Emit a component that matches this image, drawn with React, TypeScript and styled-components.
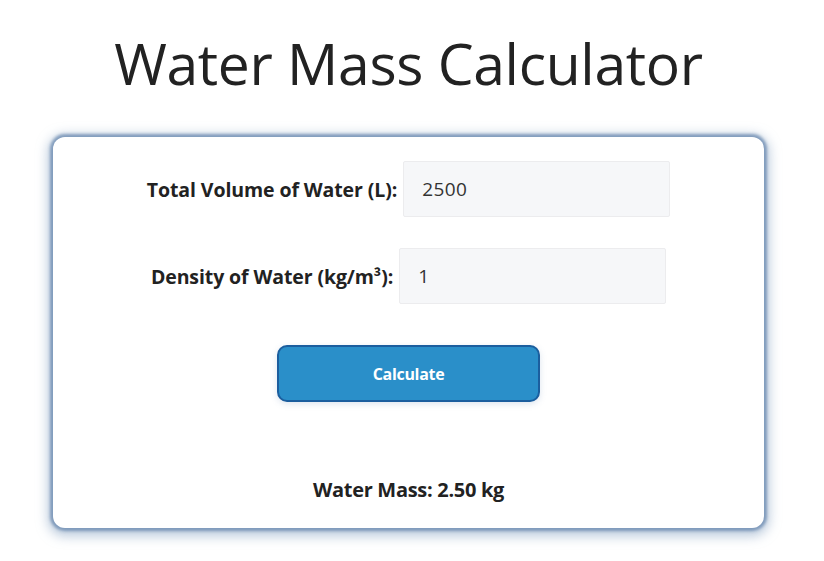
import React from "react";
import styled, { createGlobalStyle } from "styled-components";

const Global = createGlobalStyle`
  html, body { margin: 0; padding: 0; background: #ffffff; }
  body { font-family: "Open Sans", "Noto Sans", sans-serif; color: #222; }
`;

const Page = styled.div`
  width: 824px;
  height: 561px;
  box-sizing: border-box;
  padding: 0 7px 0 0;
  display: flex;
  flex-direction: column;
  align-items: center;
`;

const Title = styled.h1`
  margin: 18px 0 0;
  font-size: 57px;
  font-weight: 400;
  line-height: 90px;
  color: #222;
  letter-spacing: -0.3px;
`;

const Card = styled.div`
  margin-top: 29px;
  width: 711px;
  height: 391px;
  box-sizing: border-box;
  background: #fff;
  border-radius: 12px;
  box-shadow: 0 0 3px 3px rgba(110, 140, 178, 0.8), 0 3px 12px 5px rgba(130, 158, 192, 0.55);
  padding: 24px 0 0;
  display: flex;
  flex-direction: column;
  align-items: center;
`;

const Row = styled.div`
  display: flex;
  align-items: center;
  gap: 6px;
  margin-bottom: 31px;
`;

const Label = styled.label`
  font-size: 19.5px;
  font-weight: 700;
  color: #222;
  letter-spacing: -0.1px;
`;

const Input = styled.input`
  width: 267px;
  height: 56px;
  box-sizing: border-box;
  background: #f6f7f9;
  border: 1px solid #ececee;
  border-radius: 2px;
  padding: 0 18px;
  font-family: "Open Sans", "Noto Sans", sans-serif;
  font-size: 19px;
  letter-spacing: 0.4px;
  color: #333;
  outline: none;
`;

const Button = styled.button`
  margin-top: 10px;
  width: 263px;
  height: 57px;
  background: #2a8fc9;
  border: 2px solid #1b5e9e;
  border-radius: 10px;
  color: #fff;
  font-family: "Open Sans", "Noto Sans", sans-serif;
  font-size: 16px;
  font-weight: 700;
  letter-spacing: -0.3px;
  box-shadow: 0 2px 6px rgba(120, 150, 190, 0.25);
  cursor: pointer;
`;

const Result = styled.div`
  margin-top: 74px;
  font-size: 20px;
  font-weight: 700;
  color: #222;
  letter-spacing: -0.3px;
`;

export default function App() {
  return (
    <>
      <Global />
      <Page>
        <Title>Water Mass Calculator</Title>
        <Card>
          <Row>
            <Label>Total Volume of Water (L):</Label>
            <Input defaultValue="2500" />
          </Row>
          <Row>
            <Label>Density of Water (kg/m³):</Label>
            <Input defaultValue="1" />
          </Row>
          <Button>Calculate</Button>
          <Result>Water Mass: 2.50 kg</Result>
        </Card>
      </Page>
    </>
  );
}
